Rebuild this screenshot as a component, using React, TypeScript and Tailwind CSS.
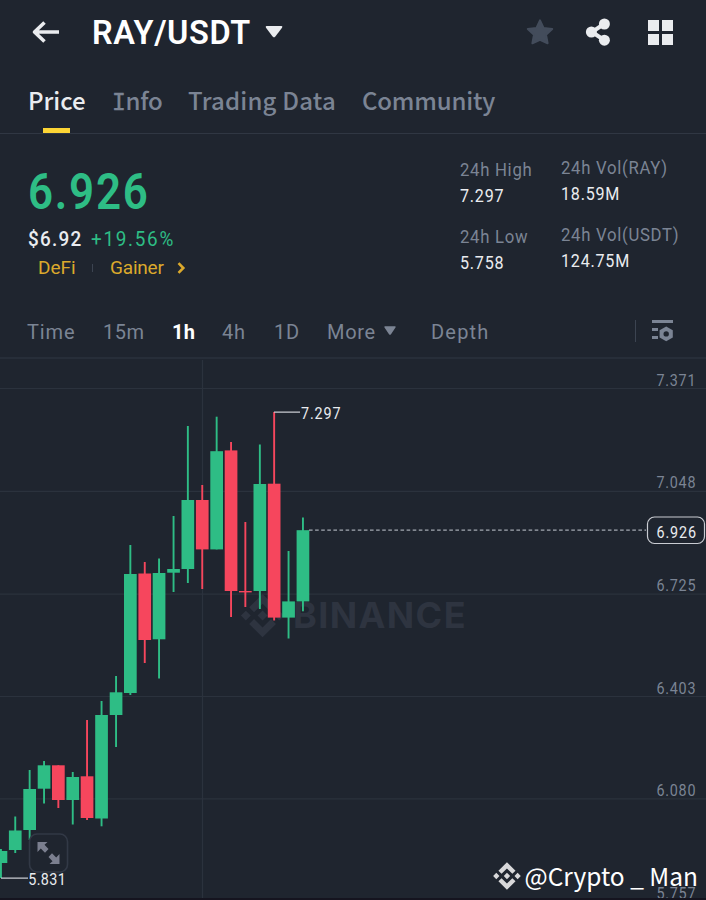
import React from "react";

type Candle = { x: number; top: number; bottom: number; high: number; low: number; up: boolean };

const CHART_TOP = 357;

// x centre, body top, body bottom, wick top, wick bottom, rising
const rows: [number, number, number, number, number, boolean][] = [
  [0.9, 851, 863, 849, 878, true],
  [15.2, 830.5, 850, 816.5, 853, true],
  [29.6, 789, 830, 770, 840, true],
  [44, 765.3, 788.7, 761, 803.5, true],
  [58.3, 765.3, 800, 765.3, 808, false],
  [72.7, 777, 800, 772, 824.5, true],
  [87, 776.3, 818, 720, 820, false],
  [101.5, 715, 818.5, 701, 826.3, true],
  [116, 692.3, 715, 676, 747, true],
  [130.3, 574, 693, 545, 695, true],
  [144.7, 573.5, 640, 562, 663, false],
  [159, 573, 639.3, 558.5, 678.5, true],
  [173.5, 569, 572.7, 516, 592, true],
  [187.8, 500, 569, 426, 583, true],
  [202.2, 500, 549.4, 485, 589, false],
  [216.6, 451.2, 549.4, 416.7, 549.4, true],
  [231, 450.4, 591, 442, 617, false],
  [245.3, 591, 592.4, 522, 607, false],
  [259.8, 484, 591, 444.5, 609, true],
  [274.1, 483.7, 617.6, 412, 620.5, false],
  [288.5, 601.4, 617.6, 551, 638.5, true],
  [302.9, 530.2, 601.4, 517.5, 611.3, true],
];

const candles: Candle[] = rows.map(([x, top, bottom, high, low, up]) => ({
  x,
  top: top - CHART_TOP,
  bottom: bottom - CHART_TOP,
  high: high - CHART_TOP,
  low: low - CHART_TOP,
  up,
}));

const axis = [
  { label: "7.371", y: 28.5 },
  { label: "7.048", y: 131.3 },
  { label: "6.725", y: 233.8 },
  { label: "6.403", y: 336.5 },
  { label: "6.080", y: 439.2 },
  { label: "5.757", y: 541.5 },
];

const NARROW = 0.87;

// Price figure drawn in a condensed width inside the chart
function Figure({ x, y, width, fill, children }: { x: number; y: number; width: number; fill: string; children: string }) {
  return (
    <text transform={`translate(${x} ${y}) scale(${NARROW} 1)`} fontSize="16.5" fill={fill} textLength={width / NARROW}>
      {children}
    </text>
  );
}

function BinanceMark() {
  return (
    <path d="M38.2 53.2 63 28.4l24.8 24.8 14.5-14.4L63 -.3 23.9 38.8zM-.3 63.1l14.4-14.4 14.5 14.4-14.5 14.5zM38.2 73.1 63 97.9l24.8-24.8 14.5 14.4L63 126.6 23.9 87.5zM97.6 63.1l14.4-14.4 14.5 14.4L112 77.6zM77.8 63.1 63 48.4 48.4 63.1 63 77.8z" />
  );
}

function Stat({ label, value }: { label: string; value: string }) {
  return (
    <div className="flex h-[67px] flex-col items-start whitespace-nowrap">
      <span className="origin-left scale-x-[.93] text-[18px] leading-[26px] tracking-[0.75px] text-[#7b8494]">{label}</span>
      <span className="origin-left scale-x-[.87] text-[18.5px] leading-[26px] tracking-[0.9px] text-[#eaecef]">{value}</span>
    </div>
  );
}

function Header() {
  return (
    <header className="flex h-[64px] items-center pl-[31px] pr-[33px]">
      <svg width="30" height="24" viewBox="0 0 30 24" fill="none" stroke="#eaecef" strokeWidth="3.6">
        <path d="M13.500 2.500 3.500 12 13.500 21.500M3 12H28" strokeLinejoin="round" />
      </svg>
      <h1 className="ml-[31px] mt-[2px] w-[160px] whitespace-nowrap font-['Roboto',sans-serif] text-[32.5px] font-semibold leading-[40px] tracking-[0.6px] text-white">RAY/USDT</h1>
      <svg className="ml-[12px]" width="20" height="16" viewBox="0 0 20 16" fill="#eaecef">
        <path d="M2.5 2H17.5Q19 2.2 18 3.8L11.4 12.6Q10 14.2 8.6 12.6L2 3.8Q1.200 2.200 2.500 2Z" />
      </svg>
      <div className="ml-auto flex items-center">
        <svg width="30" height="30" viewBox="0 0 30 30" fill="#434c5b" stroke="#434c5b" strokeWidth="2" strokeLinejoin="round">
          <path d="M15 3.300 18.500 10.900 27.200 12 21 17.700 22.600 26.300 15 22.900 7.400 26.300 9 17.700 2.800 12 11.500 10.900Z" />
        </svg>
        <svg className="ml-[28px]" width="30" height="30" viewBox="0 0 30 30" fill="#eaecef">
          <path d="M21 7 9 15 21 23" fill="none" stroke="#eaecef" strokeWidth="4" />
          <circle cx="21.400" cy="7" r="5.500" />
          <circle cx="8.400" cy="15" r="5.500" />
          <circle cx="21.400" cy="23.200" r="5.500" />
        </svg>
        <div className="ml-[35px] grid grid-cols-2 gap-[3px]">
          <i className="size-[11px] bg-[#eaecef]" />
          <i className="size-[11px] bg-[#eaecef]" />
          <i className="size-[11px] bg-[#eaecef]" />
          <i className="size-[11px] bg-[#eaecef]" />
        </div>
      </div>
    </header>
  );
}

function Tabs() {
  return (
    <nav className="flex h-[70px] border-b border-[#303743] pl-[28px] pt-[18px] font-['Noto_Sans_CJK_SC','Noto_Sans',sans-serif] text-[24px] font-medium leading-[36px] text-[#7b8494]">
      <div className="flex w-[85px] flex-col">
        <span className="whitespace-nowrap text-[#eaecef]">Price</span>
        <i className="ml-[15px] mt-[10px] h-[5px] w-[27px] shrink-0 bg-[#fcd535]" />
      </div>
      <span className="w-[75px] whitespace-nowrap tracking-[-0.3px]">
        <span className="ml-[-1px] font-['DejaVu_Sans_Mono',monospace] text-[23px] leading-none [-webkit-text-stroke:0.4px_#7b8494]">I</span>nfo
      </span>
      <span className="w-[174px] whitespace-nowrap tracking-[0.2px]">Trading Data</span>
      <span className="whitespace-nowrap tracking-[-0.2px]">Community</span>
    </nav>
  );
}

function Summary() {
  return (
    <section className="flex h-[170px] pl-[28px]">
      <div className="w-[432px] pt-[31px]">
        <div className="h-[60px] w-[150px] origin-left scale-x-[.87] text-[50.5px] font-semibold leading-[53px] tracking-[2px] text-[#2ebd85]">6.926</div>
        <div className="flex h-[29px] items-center whitespace-nowrap text-[21px]">
          <span className="w-[63px] origin-left scale-x-[.9] font-medium tracking-[1.4px] text-[#eaecef]">$6.92</span>
          <span className="origin-left scale-x-[.9] tracking-[1.900px] text-[#2ebd85]">+19.56%</span>
        </div>
        <div className="flex h-[28px] items-center pl-[10px] text-[19px] text-[#dba92c]">
          <span className="w-[54px]">DeFi</span>
          <i className="h-[8px] w-px bg-[#3c4451]" />
          <span className="ml-[17px] w-[65px] tracking-[-0.2px]">Gainer</span>
          <svg width="14" height="14" viewBox="0 0 14 14" fill="none" stroke="#dba92c" strokeWidth="2.6">
            <path d="M3.500 2.200 8.300 7 3.500 11.800" />
          </svg>
        </div>
      </div>
      <div className="w-[101px] pt-[23px]">
        <Stat label="24h High" value="7.297" />
        <Stat label="24h Low" value="5.758" />
      </div>
      <div className="pt-[21px]">
        <Stat label="24h Vol(RAY)" value="18.59M" />
        <Stat label="24h Vol(USDT)" value="124.75M" />
      </div>
    </section>
  );
}

function Intervals() {
  return (
    <nav className="flex h-[53px] items-center whitespace-nowrap pl-[27px] text-[20px] text-[#7b8494]">
      <span className="mt-[2px] w-[76px] tracking-[0.9px]">Time</span>
      <span className="mt-[2px] w-[69px] tracking-[0.5px]">15m</span>
      <span className="mt-[2px] w-[50px] font-bold tracking-[0.3px] text-white">1h</span>
      <span className="mt-[2px] w-[52px] tracking-[0.8px]">4h</span>
      <span className="mt-[2px] w-[53px] tracking-[0.8px]">1D</span>
      <span className="mt-[2px] w-[56px] tracking-[0.7px]">More</span>
      <svg width="14" height="12" viewBox="0 0 14 12" fill="#7b8494">
        <path d="M2 1.200H12Q13.300 1.500 12.500 2.600L8 9.200Q7 10.400 6 9.200L1.500 2.600Q.7 1.500 2 1.200Z" />
      </svg>
      <span className="ml-[34px] mt-[2px] tracking-[1.200px]">Depth</span>
      <i className="ml-auto h-[22px] w-px bg-[#3c4451]" />
      <svg className="ml-[14px] mr-[30px]" width="26" height="24" viewBox="0 0 26 24" fill="#7b8494">
        <path d="M2 1H23V4H2ZM2 9H8V12H2ZM2 17H8V20H2Z" />
        <path fillRule="evenodd" d="M16.200 7.500 22.800 11.200V18.500L16.200 22.200 9.600 18.500V11.200ZM16.200 12.200A2.700 2.700 0 1 0 16.200 17.600A2.700 2.700 0 1 0 16.200 12.200Z" />
      </svg>
    </nav>
  );
}

function Chart() {
  return (
    <section className="relative h-[543px] w-[706px]">
      <svg className="block" width="706" height="543" viewBox="0 0 706 543">
        <path d="M0 1H706" stroke="#272e39" strokeWidth="2" />
        <path d="M0 31.500H706M0 134.300H706M0 237.200H706M0 339.500H706M0 441.800H706M202.500 3V541" stroke="#2b323d" strokeWidth="1.200" fill="none" />
        <g fill="#2e3440">
          <g transform="translate(241 237) scale(.342)">
            <BinanceMark />
          </g>
          <text x="293" y="271" fontFamily="Inter, sans-serif" fontWeight="700" fontSize="36" textLength="172.500">BINANCE</text>
        </g>
        {candles.map((c) => (
          <g key={c.x} fill={c.up ? "#2ebd85" : "#f6465d"}>
            <rect x={c.x - 0.9} y={c.high} width="1.9" height={c.low - c.high} />
            <rect x={c.x - 6.3} y={c.top} width="12.7" height={c.bottom - c.top} />
          </g>
        ))}
        <path d="M274 55.200H300M1 521.200H28" stroke="#c9ccd2" strokeWidth="1.200" />
        <path d="M309 173.200H646" stroke="#a4a9b2" strokeWidth="1.300" strokeDasharray="3.600 2.500" />
        <Figure x={301} y={62} width={39.5} fill="#eaecef">7.297</Figure>
        {axis.map((a) => (
          <Figure key={a.label} x={656.5} y={a.y} width={39} fill="#7b8494">{a.label}</Figure>
        ))}
        <rect x="647.500" y="160" width="57" height="26.500" rx="7" fill="#1f252f" stroke="#c9ccd2" strokeWidth="1.200" />
        <Figure x={656.5} y={181.3} width={39.5} fill="#eaecef">6.926</Figure>
        <rect x="29.500" y="477" width="38" height="38" rx="7.500" fill="#1f252f" stroke="#323946" strokeWidth="1.600" />
        <Figure x={28.3} y={528} width={37.5} fill="#eaecef">5.831</Figure>
        <g fill="#7b7f8f" transform="translate(37 484.500)">
          <path d="M.5.5H10.500L7.500 3.300 11.500 7.600 8 11.200 3.800 7 .5 10.500ZM22.500 22.500H12.500L15.500 19.700 11.500 15.400 15 11.800 19.200 16 22.500 12.500Z" />
        </g>
        <path d="M0 542H706" stroke="#15141f" strokeWidth="2" />
      </svg>
      <div className="absolute bottom-[6px] right-[8px] flex items-center gap-[3px] whitespace-nowrap font-['Noto_Sans_CJK_SC','Noto_Sans',sans-serif] text-[24.5px] leading-[36px] text-white">
        <svg width="28" height="28" viewBox="-1 -1 128.500 128.500" fill="#d8d8da">
          <BinanceMark />
        </svg>
        <span>@Crypto _ Man</span>
      </div>
    </section>
  );
}

export default function App() {
  return (
    <main className="h-[900px] w-[706px] overflow-hidden bg-[#1f252f] font-['Roboto','Liberation_Sans',sans-serif]">
      <Header />
      <Tabs />
      <Summary />
      <Intervals />
      <Chart />
    </main>
  );
}
